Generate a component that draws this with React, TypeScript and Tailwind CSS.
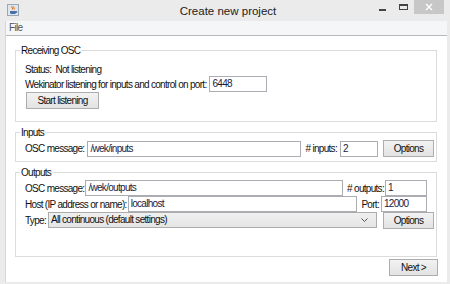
import React from 'react';

const font = { fontFamily: '"Liberation Sans", Arial, sans-serif' };

const Field = ({ value, className = '' }: { value: string; className?: string }) => (
  <div
    className={`h-[16px] border border-[#abadb3] bg-white px-[2px] text-[10px] leading-[14px] text-[#1a1a40] whitespace-nowrap overflow-hidden ${className}`}
  >
    {value}
  </div>
);

const Button = ({ label, className = '' }: { label: string; className?: string }) => (
  <div
    className={`h-[17px] border border-[#adadad] bg-gradient-to-b from-[#f2f2f2] to-[#e3e3e3] text-[10px] leading-[15px] text-[#111] text-center ${className}`}
  >
    {label}
  </div>
);

const Group = ({ title, className = '', children }: { title: string; className?: string; children: React.ReactNode }) => (
  <div className={`ml-[9px] mr-[10px] border border-[#dcdcdc] ${className}`}>
    <div className="-mt-[7px] ml-[4px] h-[13px] w-fit bg-white px-[1px] text-[10px] leading-[13px] text-[#111]">
      {title}
    </div>
    {children}
  </div>
);

export default function App() {
  return (
    <div className="w-[450px] h-[284px] bg-[#ebebeb] flex flex-col overflow-hidden text-[#111] tracking-[-0.7px]" style={font}>
      {/* Title bar */}
      <div className="h-[21px] flex items-start">
        <div className="ml-[7px] mt-[4px] w-[12px] h-[12px]">
          <svg width="12" height="12" viewBox="0 0 12 12">
            <rect x="0.5" y="0.5" width="11" height="11" fill="#dfe6ee" stroke="#9aa7b5" />
            <path d="M5 2 C4 3.5 6.5 4 5.5 5.5 M7 2.5 C6 3.8 8 4.3 7 5.5" stroke="#e8741c" strokeWidth="1.1" fill="none" />
            <path d="M3 7 H9 V8.5 C9 9.5 8 10 7 10 H5 C4 10 3 9.5 3 8.5 Z" fill="#4a6ea8" />
            <path d="M9 7.5 H10 V8.5 H9" stroke="#4a6ea8" strokeWidth="0.8" fill="none" />
          </svg>
        </div>
        <div className="flex-1 text-center text-[11.5px] leading-[20px] text-[#222] pl-[58px] pt-[1px] tracking-normal">
          Create new project
        </div>
        <div className="flex items-start">
          <div className="w-[7px] h-[2px] bg-[#444] mt-[9px] mr-[13px]" />
          <div className="w-[9px] h-[6px] border border-[#444] border-t-2 mt-[4px] mr-[6px]" />
          <div className="w-[30px] h-[14px] bg-[#c7c7c7] flex items-center justify-center mr-[6px]">
            <svg width="8" height="8" viewBox="0 0 8 8">
              <path d="M1 1 L7 7 M7 1 L1 7" stroke="#fff" strokeWidth="1.4" />
            </svg>
          </div>
        </div>
      </div>

      {/* Window body */}
      <div className="flex-1 ml-[5px] mr-[3px] mb-[2px] flex flex-col border-l border-[#d6d6d6]">
        {/* Menu bar */}
        <div className="h-[15px] bg-[#f5f6f7] border-b border-[#b9b9b9] text-[10px] leading-[14px] text-[#555] pl-[3px]">
          File
        </div>

        {/* Content */}
        <div className="flex-1 bg-white flex flex-col">
          <Group title="Receiving OSC" className="mt-[14px] pb-[12px]">
            <div className="pl-[9px]">
              <div className="mt-[6px] h-[13px] text-[10px] leading-[13px]">Status:&nbsp; Not listening</div>
              <div className="h-[16px] flex items-center gap-[3px] text-[10px]">
                <span className="whitespace-nowrap">Wekinator listening for inputs and control on port:</span>
                <Field value="6448" className="w-[58px]" />
              </div>
              <Button label="Start listening" className="ml-[1px] w-[73px]" />
            </div>
          </Group>

          <Group title="Inputs" className="mt-[10px] pb-[4px]">
            <div className="mt-[1px] h-[17px] flex items-center pl-[9px] pr-[2px] text-[10px]">
              <span className="whitespace-nowrap mr-[3px]">OSC message:</span>
              <Field value="/wek/inputs" className="flex-1" />
              <span className="whitespace-nowrap ml-[4px] mr-[3px]"># inputs:</span>
              <Field value="2" className="w-[38px]" />
              <Button label="Options" className="ml-[5px] w-[51px]" />
            </div>
          </Group>

          <Group title="Outputs" className="mt-[10px] pb-[28px]">
            <div className="mt-[1px] flex flex-col text-[10px]">
              <div className="h-[16px] flex items-center pl-[9px] pr-[9px]">
                <span className="whitespace-nowrap mr-[1px]">OSC message:</span>
                <Field value="/wek/outputs" className="flex-1" />
                <span className="whitespace-nowrap ml-[4px] mr-[1px]"># outputs:</span>
                <Field value="1" className="w-[42px]" />
              </div>
              <div className="h-[16px] flex items-center pl-[9px] pr-[9px]">
                <span className="whitespace-nowrap mr-[1px]">Host (IP address or name):</span>
                <Field value="localhost" className="flex-1" />
                <span className="whitespace-nowrap ml-[4px] mr-[2px]">Port:</span>
                <Field value="12000" className="w-[46px]" />
              </div>
              <div className="h-[16px] flex items-center pl-[9px] pr-[2px]">
                <span className="whitespace-nowrap mr-[2px]">Type:</span>
                <div className="flex-1 h-[16px] border border-[#acacac] bg-gradient-to-b from-[#f0f0f0] to-[#e5e5e5] flex items-center pl-[2px] pr-[8px]">
                  <span className="flex-1 whitespace-nowrap leading-[14px]">All continuous (default settings)</span>
                  <svg width="7" height="4" viewBox="0 0 7 4">
                    <path d="M0.5 0.5 L3.5 3.5 L6.5 0.5" stroke="#555" strokeWidth="1" fill="none" />
                  </svg>
                </div>
                <Button label="Options" className="ml-[6px] w-[51px]" />
              </div>
            </div>
          </Group>

          <div className="flex justify-end mr-[9px] mt-[2px]">
            <Button label="Next >" className="w-[49px]" />
          </div>
        </div>
      </div>
    </div>
  );
}
